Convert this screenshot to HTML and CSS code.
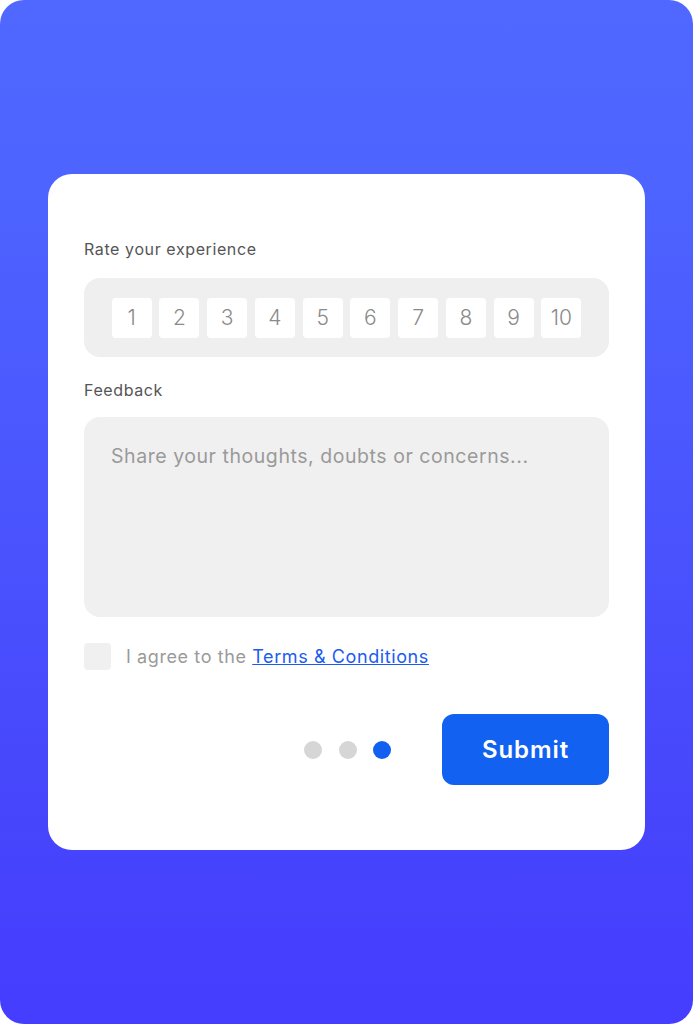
FILE: index.html
```html
<!DOCTYPE html>
<html>
<head>
<meta charset="utf-8">
<link rel="stylesheet" href="styles.css">
</head>
<body>
<div class="screen">
  <form class="card">
    <div class="label">Rate your experience</div>
    <div class="rating">
      <span class="cell">1</span><span class="cell">2</span><span class="cell">3</span><span class="cell">4</span><span class="cell">5</span><span class="cell">6</span><span class="cell">7</span><span class="cell">8</span><span class="cell">9</span><span class="cell">10</span>
    </div>
    <div class="label label-feedback">Feedback</div>
    <div class="textarea">Share your thoughts, doubts or concerns...</div>
    <div class="agree">
      <span class="checkbox"></span>
      <span class="agree-text">I agree to the <a class="link" href="#">Terms &amp; Conditions</a></span>
    </div>
    <div class="footer">
      <div class="dots">
        <span class="dot"></span><span class="dot"></span><span class="dot active"></span>
      </div>
      <button type="button" class="submit">Submit</button>
    </div>
  </form>
</div>
</body>
</html>
```
FILE: styles.css
```css
html, body {
  margin: 0;
  padding: 0;
  background: #ffffff;
}
.screen {
  width: 693px;
  height: 1024px;
  border-radius: 24px;
  background: linear-gradient(180deg, #5068ff 0%, #4d63ff 20%, #4745fc 80%, #453dff 100%);
  display: flex;
  justify-content: center;
  padding-top: 174px;
  box-sizing: border-box;
  font-family: Inter, "Noto Sans", sans-serif;
}
.card {
  width: 597px;
  height: 676px;
  box-sizing: border-box;
  background: #ffffff;
  border-radius: 24px;
  padding: 65px 36px 0 36px;
  display: flex;
  flex-direction: column;
  margin: 0;
}
.label {
  font-size: 16px;
  line-height: 20px;
  color: #555555;
  letter-spacing: 0.6px;
}
.rating {
  margin-top: 19px;
  background: #efefef;
  border-radius: 16px;
  height: 79px;
  display: flex;
  justify-content: center;
  align-items: center;
  gap: 7.75px;
}
.cell {
  width: 40px;
  height: 40px;
  background: #ffffff;
  border-radius: 4px;
  display: flex;
  align-items: center;
  justify-content: center;
  font-size: 21px;
  font-weight: 300;
  color: #8a8a8a;
}
.label-feedback {
  margin-top: 23px;
}
.textarea {
  margin-top: 17px;
  height: 200px;
  box-sizing: border-box;
  background: #f0f0f0;
  border-radius: 16px;
  padding: 25px 27px;
  font-size: 19.5px;
  line-height: 28px;
  color: #9a9a9a;
  font-weight: 400;
  letter-spacing: 0.55px;
}
.agree {
  margin-top: 26px;
  display: flex;
  align-items: center;
  gap: 15px;
}
.checkbox {
  width: 27px;
  height: 27px;
  border-radius: 4px;
  background: #f0f0f0;
}
.agree-text {
  font-size: 18px;
  color: #9a9a9a;
  letter-spacing: 0.6px;
}
.link {
  color: #1a5cf0;
  text-decoration: underline;
}
.footer {
  margin-top: 44px;
  display: flex;
  justify-content: flex-end;
  align-items: center;
}
.dots {
  display: flex;
  gap: 16.5px;
  margin-right: 51px;
}
.dot {
  width: 18px;
  height: 18px;
  border-radius: 50%;
  background: #d6d6d6;
}
.dot.active {
  background: #1260f0;
}
.submit {
  width: 167px;
  height: 71px;
  border: none;
  border-radius: 12px;
  background: #1261f0;
  color: #ffffff;
  font-family: Inter, "Noto Sans", sans-serif;
  font-size: 24px;
  font-weight: 600;
  letter-spacing: 0.9px;
}
```
